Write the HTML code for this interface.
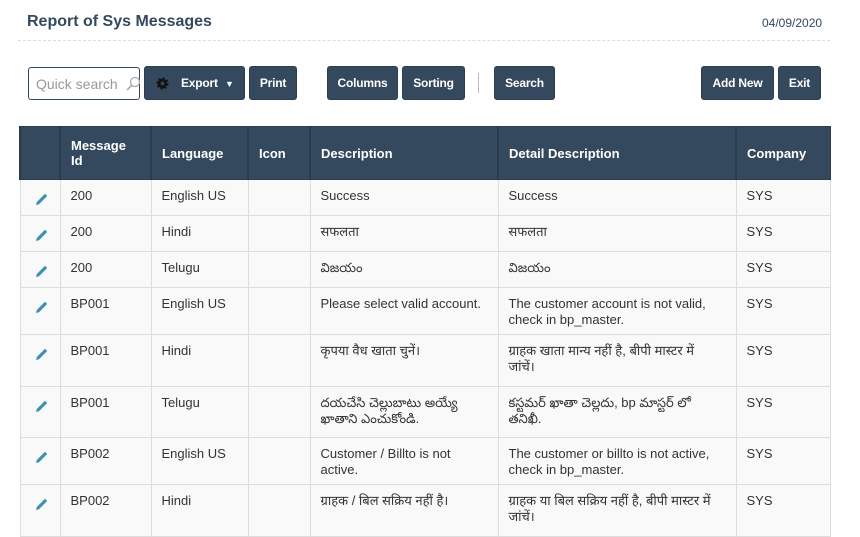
<!DOCTYPE html>
<html><head><meta charset="utf-8"><style>
*{box-sizing:border-box;margin:0;padding:0}
body{width:860px;height:532px;overflow:hidden;background:#fff;font-family:"Liberation Sans",Arial,sans-serif;color:#333;position:relative}
.title{position:absolute;left:27px;top:13px;font-size:16px;font-weight:bold;color:#34495e}
.date{position:absolute;left:762px;top:16px;font-size:12px;color:#34495e}
.dash{position:absolute;left:18px;top:40px;width:812px;border-top:1px dashed #ddd}
.btn{position:absolute;top:66px;height:34px;background:#34495e;color:#fff;font-size:12px;font-weight:bold;border-radius:3px;line-height:33px;text-align:center;border:1px solid #2c3e50;letter-spacing:-0.2px}
.qs{position:absolute;left:28px;top:67px;width:112px;height:33px;border:1px solid #34495e;border-radius:3px;font-size:14px;color:#999;padding:8px 0 0 7px}
.sep{position:absolute;left:478px;top:73px;height:20px;border-left:1px solid #bbb}
table{position:absolute;left:19px;top:126px;border-collapse:collapse;font-size:13px;table-layout:fixed}
th{background:#34495e;color:#fff;text-align:left;font-weight:bold;font-size:13px;padding:0 10px;height:53px;border:1px solid #2c3e50;border-left:2px solid #2a3b4c;line-height:15px}
td{border:1px solid #ddd;background:#f9f9f9;vertical-align:top;padding:8px 10px 0;line-height:16px;font-family:"Liberation Sans",Arial,"Noto Sans CJK SC",sans-serif}
td.e{padding:12px 0 0 14px}
</style></head><body>
<div class="title">Report of Sys Messages</div>
<div class="date">04/09/2020</div>
<div class="dash"></div>
<div class="qs">Quick search<svg style="position:absolute;right:-2px;top:8px" width="16" height="16" viewBox="0 0 16 16"><circle cx="10" cy="6" r="4.5" fill="none" stroke="#aaa" stroke-width="1.3"/><line x1="6.8" y1="9.2" x2="2" y2="14" stroke="#aaa" stroke-width="1.6"/></svg></div>
<div class="btn" style="left:144px;width:101px;text-align:left;padding-left:36px">Export <span style="font-size:9px;margin-left:4px">▼</span><svg style="position:absolute;left:10px;top:9px" width="15" height="15" viewBox="0 0 16 16"><circle cx="8" cy="8" r="5" fill="#111" stroke="#111" stroke-width="3" stroke-dasharray="2 1.9"/><circle cx="8" cy="8" r="2" fill="#34495e"/></svg></div>
<div class="btn" style="left:249px;width:48px">Print</div>
<div class="btn" style="left:327px;width:71px">Columns</div>
<div class="btn" style="left:402px;width:63px">Sorting</div>
<div class="sep"></div>
<div class="btn" style="left:494px;width:61px">Search</div>
<div class="btn" style="left:701px;width:73px">Add New</div>
<div class="btn" style="left:778px;width:43px">Exit</div>
<table>
<colgroup><col style="width:40px"><col style="width:91px"><col style="width:97px"><col style="width:62px"><col style="width:188px"><col style="width:238px"><col style="width:94px"></colgroup>
<tr><th></th><th>Message<br>Id</th><th>Language</th><th>Icon</th><th>Description</th><th>Detail Description</th><th>Company</th></tr>
<tr style="height:36px"><td class="e"><svg width="14" height="14" viewBox="0 0 14 14"><path d="M1 13 L1.8 10 L10 1.8 L12.2 4 L4 12.2 Z" fill="#3d8fb5"/></svg></td><td>200</td><td>English US</td><td></td><td>Success</td><td>Success</td><td>SYS</td></tr>
<tr style="height:36px"><td class="e"><svg width="14" height="14" viewBox="0 0 14 14"><path d="M1 13 L1.8 10 L10 1.8 L12.2 4 L4 12.2 Z" fill="#3d8fb5"/></svg></td><td>200</td><td>Hindi</td><td></td><td>सफलता</td><td>सफलता</td><td>SYS</td></tr>
<tr style="height:36px"><td class="e"><svg width="14" height="14" viewBox="0 0 14 14"><path d="M1 13 L1.8 10 L10 1.8 L12.2 4 L4 12.2 Z" fill="#3d8fb5"/></svg></td><td>200</td><td>Telugu</td><td></td><td>విజయం</td><td>విజయం</td><td>SYS</td></tr>
<tr style="height:47px"><td class="e"><svg width="14" height="14" viewBox="0 0 14 14"><path d="M1 13 L1.8 10 L10 1.8 L12.2 4 L4 12.2 Z" fill="#3d8fb5"/></svg></td><td>BP001</td><td>English US</td><td></td><td>Please select valid account.</td><td>The customer account is not valid, check in bp_master.</td><td>SYS</td></tr>
<tr style="height:52px"><td class="e"><svg width="14" height="14" viewBox="0 0 14 14"><path d="M1 13 L1.8 10 L10 1.8 L12.2 4 L4 12.2 Z" fill="#3d8fb5"/></svg></td><td>BP001</td><td>Hindi</td><td></td><td>कृपया वैध खाता चुनें।</td><td>ग्राहक खाता मान्य नहीं है, बीपी मास्टर में<br>जांचें।</td><td>SYS</td></tr>
<tr style="height:51px"><td class="e"><svg width="14" height="14" viewBox="0 0 14 14"><path d="M1 13 L1.8 10 L10 1.8 L12.2 4 L4 12.2 Z" fill="#3d8fb5"/></svg></td><td>BP001</td><td>Telugu</td><td></td><td>దయచేసి చెల్లుబాటు అయ్యే ఖాతాని ఎంచుకోండి.</td><td>కస్టమర్ ఖాతా చెల్లదు, bp మాస్టర్ లో తనిఖీ.</td><td>SYS</td></tr>
<tr style="height:47px"><td class="e"><svg width="14" height="14" viewBox="0 0 14 14"><path d="M1 13 L1.8 10 L10 1.8 L12.2 4 L4 12.2 Z" fill="#3d8fb5"/></svg></td><td>BP002</td><td>English US</td><td></td><td>Customer / Billto is not active.</td><td>The customer or billto is not active, check in bp_master.</td><td>SYS</td></tr>
<tr style="height:52px"><td class="e"><svg width="14" height="14" viewBox="0 0 14 14"><path d="M1 13 L1.8 10 L10 1.8 L12.2 4 L4 12.2 Z" fill="#3d8fb5"/></svg></td><td>BP002</td><td>Hindi</td><td></td><td>ग्राहक / बिल सक्रिय नहीं है।</td><td>ग्राहक या बिल सक्रिय नहीं है, बीपी मास्टर में<br>जांचें।</td><td>SYS</td></tr>
</table>
</body></html>
